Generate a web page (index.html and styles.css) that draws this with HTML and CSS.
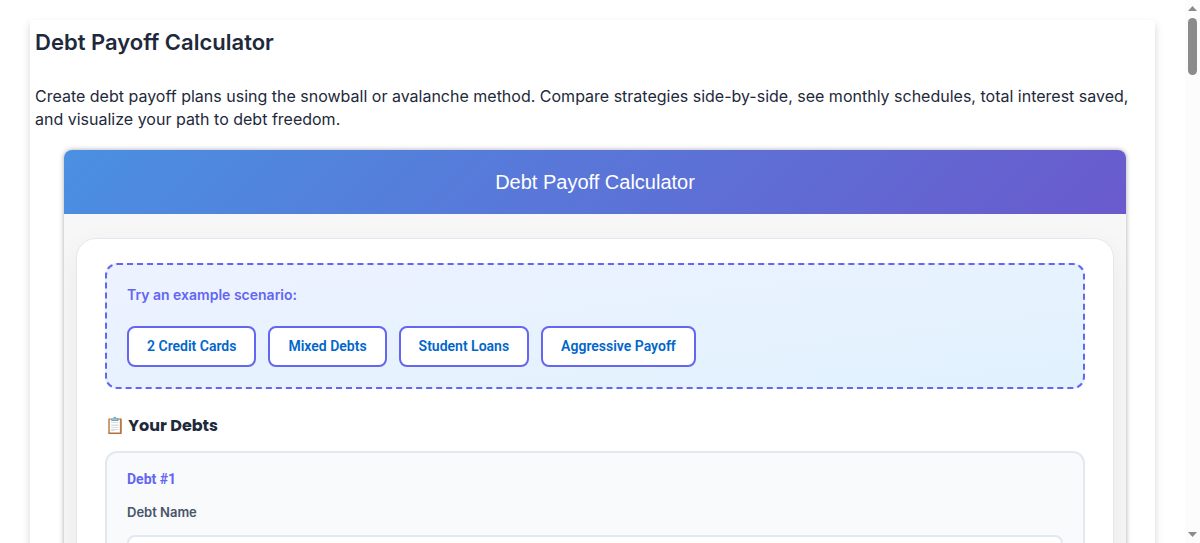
FILE: index.html
```html
<!DOCTYPE html>
<html lang="en">
<head>
<meta charset="utf-8">
<meta name="viewport" content="width=device-width, initial-scale=1">
<title>Debt Payoff Calculator</title>
<link rel="stylesheet" href="styles.css">
</head>
<body>
<div class="viewport">
  <main class="page">
    <article class="sheet">
      <h1 class="title">Debt Payoff Calculator</h1>
      <p class="intro">Create debt payoff plans using the snowball or avalanche method. Compare strategies side-by-side, see monthly schedules, total interest saved, and visualize your path to debt freedom.</p>
      <section class="widget">
        <header class="widget-header">Debt Payoff Calculator</header>
        <div class="widget-body">
          <div class="panel">
            <div class="examples">
              <p class="examples-title">Try an example scenario:</p>
              <div class="examples-list">
                <button type="button" class="example">2 Credit Cards</button>
                <button type="button" class="example">Mixed Debts</button>
                <button type="button" class="example">Student Loans</button>
                <button type="button" class="example">Aggressive Payoff</button>
              </div>
            </div>
            <h2 class="section-title"><span class="emoji">📋</span> Your Debts</h2>
            <div class="debt">
              <h3 class="debt-title">Debt #1</h3>
              <label class="debt-label" for="debt-name">Debt Name</label>
              <input class="debt-input" id="debt-name" type="text">
            </div>
          </div>
        </div>
      </section>
    </article>
  </main>
  <div class="scrollbar" aria-hidden="true">
    <svg class="arrow" viewBox="0 0 9 5"><path d="M4.5 0L9 5H0z"/></svg>
    <div class="thumb"></div>
    <svg class="arrow arrow-down" viewBox="0 0 9 5"><path d="M0 0h9L4.500 5z"/></svg>
  </div>
</div>
</body>
</html>
```
FILE: styles.css
```css
* { box-sizing: border-box; }

body {
  margin: 0;
  background: #fff;
  color: #1e293b;
  font-family: Inter, "Liberation Sans", sans-serif;
}

.viewport {
  display: grid;
  grid-template-columns: minmax(0, 1fr) 15px;
  height: 100vh;
  overflow: hidden;
}

.page {
  padding: 20px 30px;
  overflow: hidden;
}

.sheet {
  padding: 5px;
  background: #fff;
  box-shadow: 0 4px 8px rgba(0, 0, 0, 0.16);
}

.title {
  margin: 0;
  font-size: 22px;
  line-height: 34px;
  font-weight: 600;
}

.intro {
  margin: 26px 0 19px;
  font-size: 16px;
  line-height: 23px;
}

.widget {
  margin: 0 24px 24px 29px;
  border-radius: 8px;
  overflow: hidden;
  background: #f7f7f7;
  box-shadow: 0 0 5px rgba(0, 0, 0, 0.35);
}

.widget-header {
  padding: 20px;
  background: linear-gradient(135deg, #4a90e2, #6a5acd);
  color: #fff;
  font-family: "Liberation Sans", Arial, sans-serif;
  font-size: 20px;
  line-height: 24px;
  text-align: center;
}

.widget-body { padding: 24px 12px; }

.panel {
  padding: 24px 28px;
  border: 1px solid #e2e8f0;
  border-radius: 20px;
  background: #fff;
  box-shadow: 0 10px 30px rgba(0, 0, 0, 0.06);
}

.examples {
  padding: 19px 20px 20px;
  border: 2px dashed #6366f1;
  border-radius: 12px;
  background: linear-gradient(to bottom right, #eef2ff, #e0f2fe);
}

.examples-title {
  margin: 0 0 21px;
  color: #6366f1;
  font-size: 14px;
  line-height: 21px;
  font-weight: 600;
}

.examples-list {
  display: flex;
  flex-wrap: wrap;
  gap: 12px;
}

.example {
  padding: 8px 18px;
  border: 2px solid #6366f1;
  border-radius: 8px;
  background: #fff;
  color: #0066cc;
  font-family: Roboto, sans-serif;
  font-size: 14px;
  line-height: 21px;
  font-weight: 600;
}

.section-title {
  margin: 24px 0 12px;
  font-family: Poppins, Inter, sans-serif;
  font-size: 16px;
  line-height: 26px;
  font-weight: 700;
}

.emoji {
  font-family: "Noto Color Emoji", sans-serif;
  font-weight: 400;
}

.debt {
  padding: 16px 20px 20px;
  border: 2px solid #e2e8f0;
  border-radius: 12px;
  background: #f8fafc;
}

.debt-title {
  margin: 0 0 14px;
  color: #6366f1;
  font-family: Roboto, sans-serif;
  font-size: 14px;
  line-height: 20px;
  font-weight: 700;
}

.debt-label {
  display: block;
  margin-bottom: 14px;
  color: #475569;
  font-size: 13px;
  line-height: 18px;
  font-weight: 600;
}

.debt-input {
  display: block;
  width: 100%;
  height: 44px;
  padding: 0 12px;
  border: 2px solid #e2e8f0;
  border-radius: 8px;
  background: #fff;
  font-family: inherit;
  font-size: 16px;
}

.scrollbar {
  display: flex;
  flex-direction: column;
  align-items: center;
  padding: 6px 0;
  background: #fcfcfc;
}

.arrow {
  width: 9px;
  height: 5px;
  fill: #8b8b8b;
}

.arrow-down { margin-top: auto; }

.thumb {
  width: 9px;
  height: 57px;
  margin-top: 7px;
  border-radius: 5px;
  background: #8b8b8b;
}
```
